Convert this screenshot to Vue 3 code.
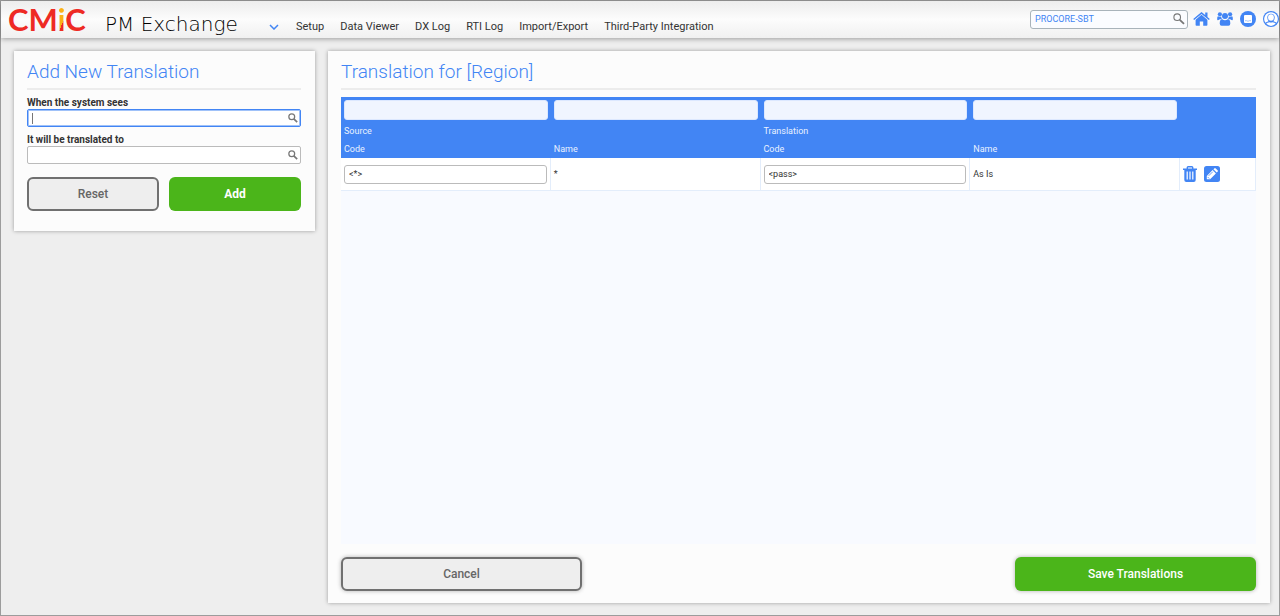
<script setup>
import { ref } from 'vue'

const menu = ['Setup', 'Data Viewer', 'DX Log', 'RTI Log', 'Import/Export', 'Third-Party Integration']
const company = ref('PROCORE-SBT')
const source = ref('')
const target = ref('')
const filters = ref(['', '', '', ''])
const filterNames = ['source code', 'source name', 'translation code', 'translation name']
const rows = ref([{ code: '<*>', name: '*', toCode: '<pass>', toName: 'As Is' }])

function reset() {
  source.value = ''
  target.value = ''
}
</script>

<template>
  <div class="page">
    <header class="topbar">
      <div class="logo"><span>CM</span><span class="logo-i">i</span><span>C</span></div>
      <div class="product">PM Exchange</div>
      <button class="switcher" aria-label="Switch application">
        <svg width="10" height="6" viewBox="0 0 10 6"><path d="M1 1l4 4 4-4" fill="none" stroke="#4285f4" stroke-width="1.5" /></svg>
      </button>
      <nav class="menu">
        <a v-for="item in menu" :key="item" href="#">{{ item }}</a>
      </nav>
      <div class="tools">
        <div class="company">
          <input v-model="company" aria-label="Company" />
          <svg class="lens" width="12" height="12" viewBox="0 0 12 12"><circle cx="4.2" cy="4.2" r="3.3" /><path d="M6.8 6.8l4.2 4" stroke-width="1.8" /></svg>
        </div>
        <a href="#" aria-label="Home">
          <svg width="17" height="14" viewBox="0 0 17 14"><path d="M8.5 2.8L2.6 7.8V13q0 .8.8.8h3.4V9.6h3.4v4.2h3.4q.8 0 .8-.8V7.8z" /><path d="M8.5 0L.2 7l.9 1.1L8.5 1.9l7.4 6.2.9-1.1-2.3-2V.4h-2.3v2.7z" /></svg>
        </a>
        <a href="#" aria-label="Users">
          <svg width="16" height="14" viewBox="0 0 16 14"><circle cx="2.9" cy="2.3" r="2.1" /><circle cx="13.1" cy="2.3" r="2.1" /><circle cx="8" cy="4.1" r="3" /><path d="M.2 7.6V6q0-1.7 1-1.7 1.8.9 3 .2 0 2 1.1 2.8H2.8L1.6 8Q.2 8.4.2 7.6zM15.8 7.6V6q0-1.7-1-1.7-1.8.9-3 .2 0 2-1.1 2.8h2.5l1.2.7q1.4.4 1.4-.4z" /><path d="M5.2 7.3Q8 9 10.8 7.3q2.5 0 2.5 4.2 0 2.2-1.9 2.2H4.6q-1.9 0-1.9-2.2 0-4.2 2.5-4.2z" /></svg>
        </a>
        <a href="#" aria-label="Messages">
          <svg width="16" height="16" viewBox="0 0 16 16"><circle cx="8" cy="8" r="8" /><rect x="4" y="4" width="8" height="8" rx="1" fill="#fff" /><path d="M5 9.7h1.7q1.3 1.2 2.6 0H11" fill="none" stroke="#8db5f9" stroke-width=".8" /></svg>
        </a>
        <a href="#" aria-label="Profile">
          <svg width="16" height="16" viewBox="0 0 16 16"><circle cx="8" cy="8" r="8" /><path d="M8 1.2a6.800 6.800 0 0 0-5.600 10.600Q3.200 10.700 5.600 10.200 4.300 8.600 4.300 6.500 4.300 2.700 8 2.700T11.700 6.500Q11.700 8.600 10.400 10.200 12.800 10.700 13.600 11.800A6.800 6.800 0 0 0 8 1.200z" fill="#fff" /><ellipse cx="8" cy="6.500" rx="2.900" ry="3.300" fill="#fff" /><path d="M3.200 12.800Q4 11.500 6.600 11.200 8 12 9.400 11.200 12 11.500 12.800 12.800 8 17 3.200 12.800z" fill="#fff" /></svg>
        </a>
      </div>
    </header>

    <main class="content">
      <form class="panel add" @submit.prevent>
        <h1>Add New Translation</h1>
        <label for="source">When the system sees</label>
        <div class="lookup active">
          <input id="source" v-model="source" />
          <i v-if="!source" class="caret"></i>
          <svg class="lens" width="10" height="10" viewBox="0 0 12 12"><circle cx="4.5" cy="4.5" r="3.5" stroke-width="1.5" /><path d="M7 7l4 4" stroke-width="2" /></svg>
        </div>
        <label for="target">It will be translated to</label>
        <div class="lookup">
          <input id="target" v-model="target" />
          <svg class="lens" width="10" height="10" viewBox="0 0 12 12"><circle cx="4.5" cy="4.5" r="3.5" stroke-width="1.5" /><path d="M7 7l4 4" stroke-width="2" /></svg>
        </div>
        <div class="pair">
          <button type="button" class="btn plain" @click="reset">Reset</button>
          <button type="submit" class="btn go">Add</button>
        </div>
      </form>

      <section class="panel list">
        <h1>Translation for [Region]</h1>
        <div class="sheet">
          <table>
            <colgroup>
              <col v-for="n in 4" :key="n" class="wide" />
              <col class="tail" />
            </colgroup>
            <thead>
              <tr class="filters">
                <td v-for="(name, i) in filterNames" :key="name"><input v-model="filters[i]" :aria-label="'Filter by ' + name" /></td>
                <td></td>
              </tr>
              <tr>
                <th colspan="2">Source</th>
                <th colspan="2">Translation</th>
                <td></td>
              </tr>
              <tr>
                <th>Code</th>
                <th>Name</th>
                <th>Code</th>
                <th>Name</th>
                <td></td>
              </tr>
            </thead>
            <tbody>
              <tr v-for="row in rows" :key="row.code">
                <td><input v-model="row.code" aria-label="Source code" /></td>
                <td>{{ row.name }}</td>
                <td><input v-model="row.toCode" aria-label="Translation code" /></td>
                <td>{{ row.toName }}</td>
                <td>
                  <div class="actions">
                    <button aria-label="Delete">
                      <svg width="14" height="16" viewBox="0 0 14 16"><path d="M4.3 3V1.6Q4.3.8 5.1.8h3.8q.8 0 .8 .8V3M0 3.3h14" fill="none" stroke="#4285f4" stroke-width="1.4" /><path d="M1.3 4h11.4v10q0 2-2 2H3.3q-2 0-2-2z" /><path d="M4.2 5.5v8M7 5.5v8M9.8 5.5v8" stroke="#fff" stroke-width="1.2" /></svg>
                    </button>
                    <button aria-label="Edit">
                      <svg width="16" height="16" viewBox="0 0 16 16"><rect width="16" height="16" rx="2.5" /><path d="M2.8 13.2v-3.3L8.6 4.1l3.3 3.3-5.8 5.8zM9.4 3.3l.9-.9q.7-.6 1.4 0l1.9 1.9q.6.7 0 1.4l-.9.9z" fill="#fff" /><path d="M4.7 9.8L8.8 5.7M3.6 10.9l1.6 1.6" stroke="#4285f4" stroke-width=".8" /></svg>
                    </button>
                  </div>
                </td>
              </tr>
            </tbody>
          </table>
        </div>
        <footer class="foot">
          <button class="btn plain raised">Cancel</button>
          <button class="btn go raised">Save Translations</button>
        </footer>
      </section>
    </main>
  </div>
</template>

<style>
body { margin: 0; }
</style>

<style scoped>
* { box-sizing: border-box; }
.page {
  display: flex;
  flex-direction: column;
  min-height: 100vh;
  border: 1px solid #9c9c9c;
  background: #eee;
  color: #333;
  font: 10px/16px Roboto, sans-serif;
}
input, button { font: inherit; color: inherit; margin: 0; }
button { padding: 0; border: 0; background: none; cursor: pointer; }
svg { display: block; }
.topbar {
  display: flex;
  height: 37px;
  padding-left: 7px;
  overflow: hidden;
  background: linear-gradient(#ededed, #fcfcfc 50%, #f0f0f0);
  box-shadow: 0 1px 5px rgba(0, 0, 0, 0.35);
}
.logo { width: 97px; font: 700 31px/36px Lato, sans-serif; color: #ee2a24; white-space: nowrap; }
.logo-i {
  background: linear-gradient(115deg, #fbb116 62%, #ee2a24 62%);
  background-clip: text;
  color: transparent;
}
.product { width: 159px; font: 200 20px/46px "DejaVu Sans", sans-serif; color: #000; white-space: nowrap; }
.switcher { width: 20px; padding: 14px 5px 0; }
.menu { display: flex; gap: 16px; padding-left: 12px; font-size: 11px; line-height: 52px; white-space: nowrap; }
.menu a { color: #333; text-decoration: none; }
.tools { display: flex; align-items: center; gap: 7px; height: 36px; margin-left: auto; }
.tools a { flex: none; fill: #4285f4; }
.company { position: relative; width: 158px; margin-right: -2px; }
.company input {
  display: block;
  width: 100%;
  height: 19px;
  padding: 0 20px 0 4px;
  border: 1px solid #a9b3ba;
  border-radius: 3px;
  background: #fbfcff;
  color: #4285f4;
  font-size: 9px;
}
.lens { position: absolute; fill: none; stroke: #777; stroke-width: 1.1; }
.company .lens { top: 3px; right: 3px; }
.content {
  display: grid;
  flex: 1;
  grid-template-columns: 301px 1fr;
  gap: 13px;
  align-items: start;
  padding: 13px 9px 12px 13px;
}
.panel { padding: 9px 14px 12px 13px; background: #fcfcfc; box-shadow: 0 0 4px rgba(0, 0, 0, 0.35); }
.add { padding-bottom: 20px; }
.list { display: flex; flex-direction: column; align-self: stretch; }
h1 {
  margin: 0 0 6px;
  padding-bottom: 4px;
  border-bottom: 2px solid #ececec;
  color: #4285f4;
  font-size: 19px;
  font-weight: 300;
  line-height: 24px;
}
.list h1 { margin-bottom: 7px; }
label { display: block; font-weight: 700; line-height: 13px; }
.lookup { position: relative; margin-bottom: 6px; }
.lookup input {
  display: block;
  width: 100%;
  height: 18px;
  padding: 0 20px 0 4px;
  border: 1px solid #bbb;
  border-radius: 2px;
  background: #fff;
  outline: 0;
}
.lookup.active input { border-color: #4285f4; box-shadow: inset 0 0 0 1px rgba(66, 133, 244, 0.5); }
.lookup .lens { top: 4px; right: 3px; }
.caret { position: absolute; top: 4px; left: 5px; width: 1px; height: 11px; background: #777; }
.pair { display: grid; grid-template-columns: 1fr 1fr; gap: 10px; margin-top: 13px; }
.btn { height: 34px; border-radius: 6px; font-size: 12px; font-weight: 500; }
.plain { border: 2px solid #707070; background: #eee; color: #666; }
.go { background: #4bb51a; color: #fff; font-weight: 700; }
.raised { width: 241px; box-shadow: 0 0 4px rgba(0, 0, 0, 0.3); font-weight: 500; }
.sheet { flex: 1; background: #f8faff; }
table { width: 100%; border-spacing: 0; table-layout: fixed; font-size: 9px; }
.tail { width: 76px; }
thead { background: #4285f4; color: #e9f1ff; }
td, th { height: 18px; padding: 0 3px; text-align: left; font-weight: 400; line-height: 16px; }
.filters td { height: 25px; }
td input { display: block; width: 100%; height: 19px; padding: 0 4px; border: 1px solid #bbb; border-radius: 3px; }
.filters input { height: 20px; border-color: #dce8ff; background: #f0f5ff; }
tbody { background: #fff; }
tbody td { height: 33px; border: solid #e3edfb; border-width: 0 1px 1px 0; }
.actions { display: flex; gap: 7px; }
.actions svg { fill: #4285f4; }
.foot { display: flex; justify-content: space-between; padding-top: 13px; }
</style>
